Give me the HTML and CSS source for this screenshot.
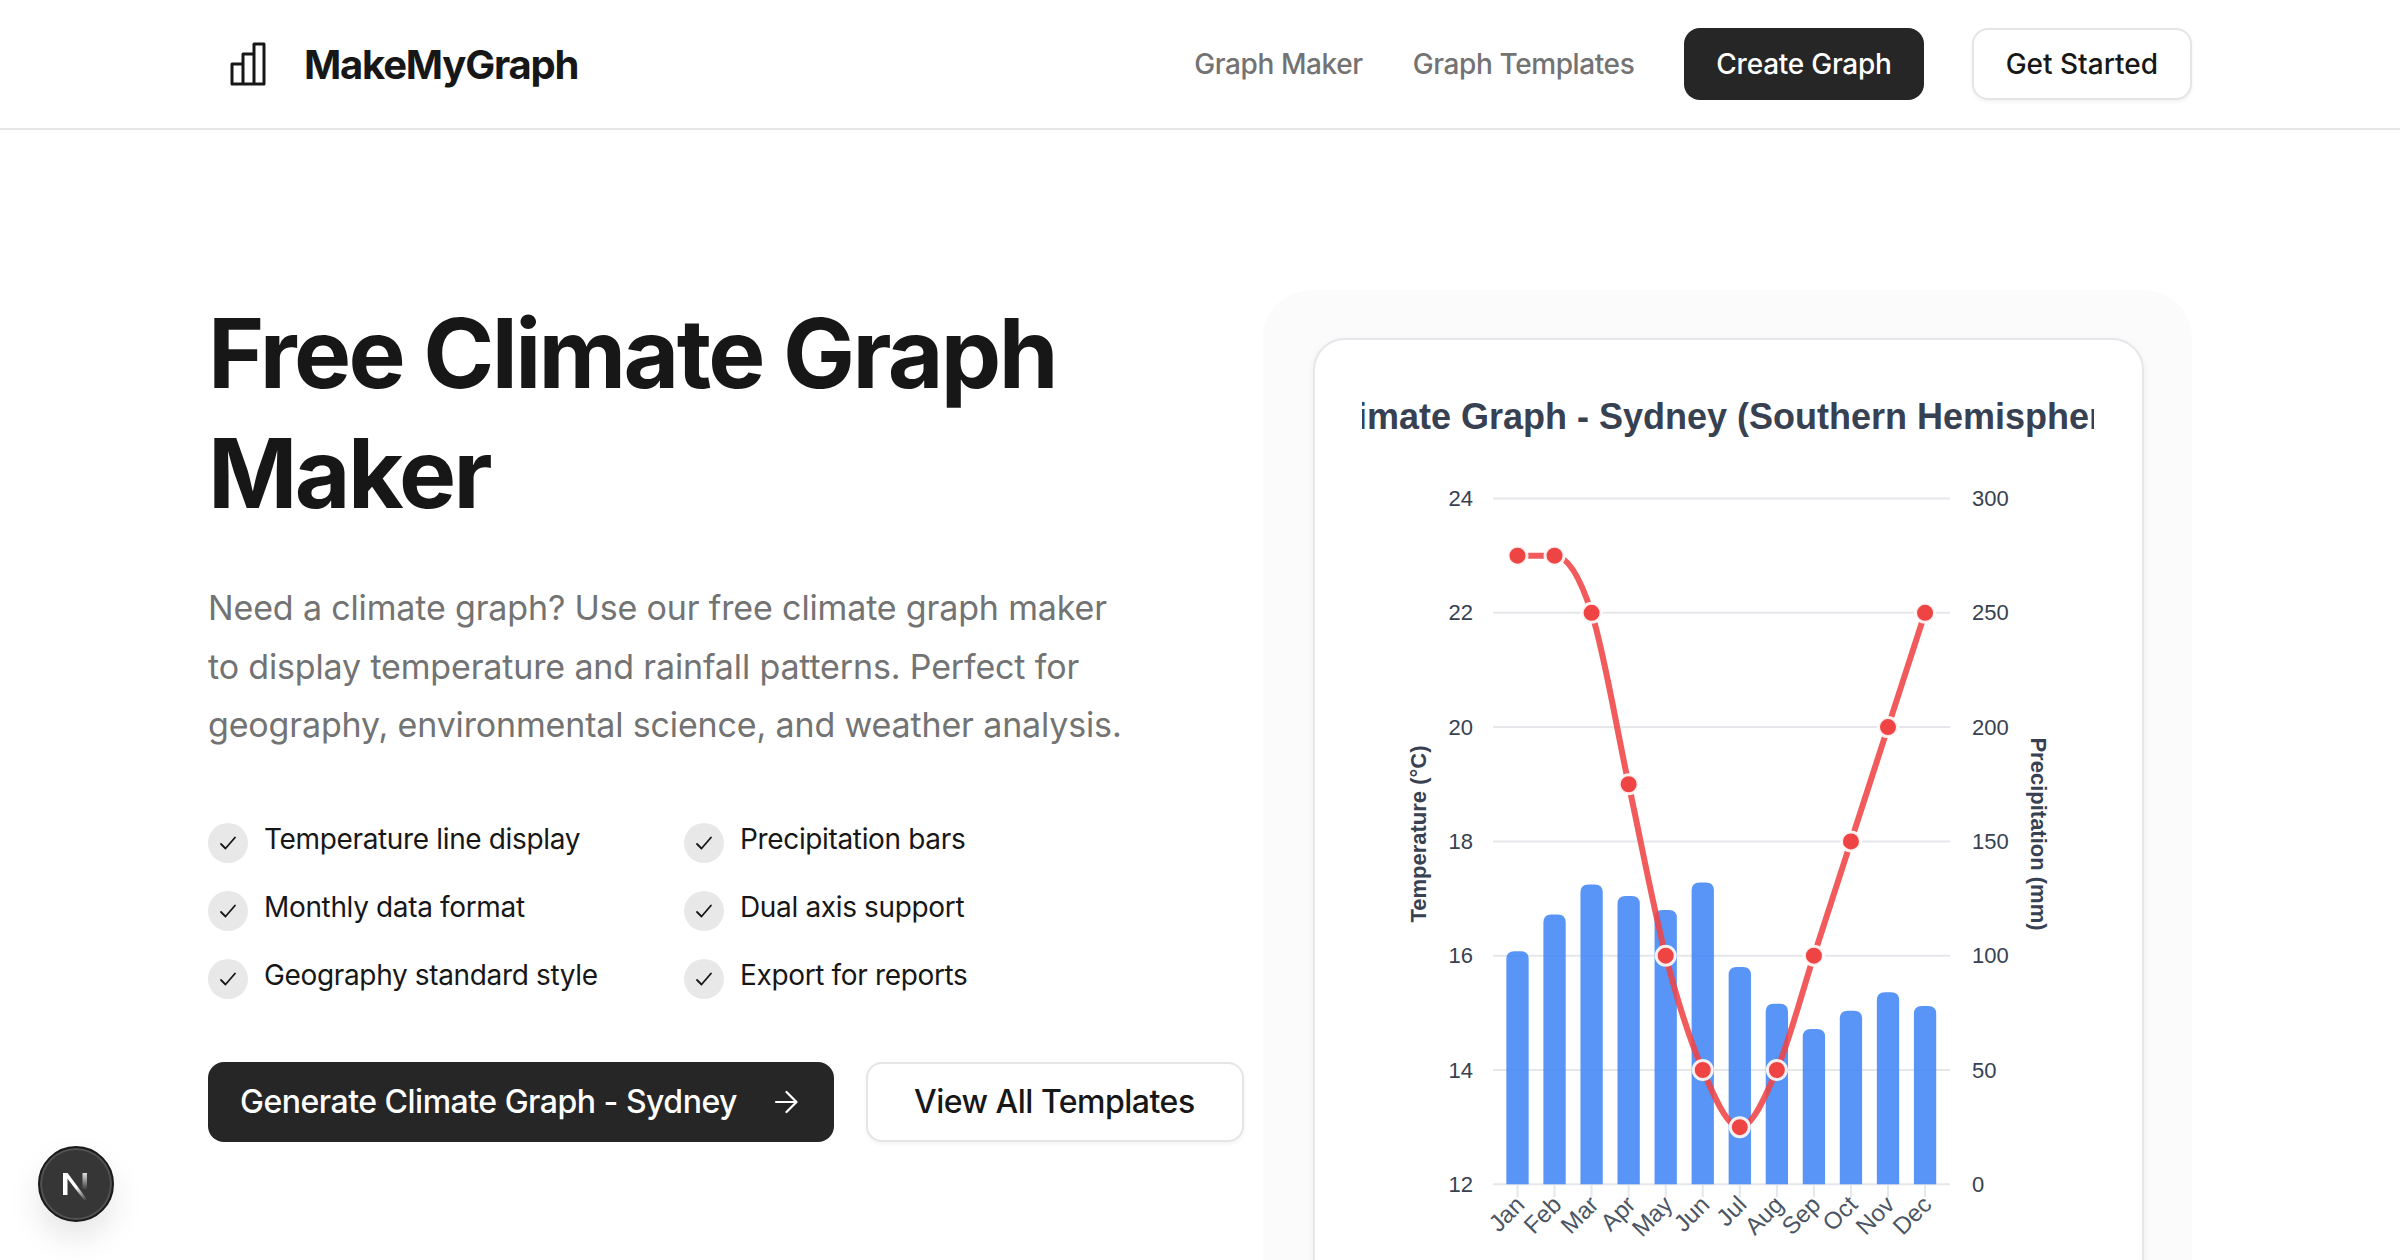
FILE: index.html
```html
<!DOCTYPE html>
<html lang="en">
<head>
    <meta charset="UTF-8">
    <meta name="viewport" content="width=device-width, initial-scale=1.0">
    <title>Free Climate Graph Maker</title>
    <link rel="stylesheet" href="styles.css">
</head>
<body>

    <header class="site-header">
        <a class="brand" href="#">
            <svg class="brand-icon" width="36" height="44" viewBox="0 0 36 44" fill="none" stroke="currentColor" stroke-width="3" stroke-linejoin="round">
                <path d="M2 42V22h11v20zM13 42V12h11v30zM24 42V2h10v40z"/>
            </svg>
            <span class="brand-name">MakeMyGraph</span>
        </a>
        <nav class="main-nav">
            <a class="nav-link" href="#">Graph Maker</a>
            <a class="nav-link" href="#">Graph Templates</a>
            <a class="btn btn-dark btn-small" href="#">Create Graph</a>
            <a class="btn btn-light btn-small" href="#">Get Started</a>
        </nav>
    </header>

    <main class="hero">
        <section class="hero-text">
            <h1>Free Climate Graph Maker</h1>
            <p class="lead">Need a climate graph? Use our free climate graph maker to display temperature and rainfall patterns. Perfect for geography, environmental science, and weather analysis.</p>

            <ul class="features">
                <li><span class="check"><svg width="20" height="20" viewBox="0 0 20 20"><path d="M3 11l4.500 4.500L17 4.500"/></svg></span>Temperature line display</li>
                <li><span class="check"><svg width="20" height="20" viewBox="0 0 20 20"><path d="M3 11l4.500 4.500L17 4.500"/></svg></span>Precipitation bars</li>
                <li><span class="check"><svg width="20" height="20" viewBox="0 0 20 20"><path d="M3 11l4.500 4.500L17 4.500"/></svg></span>Monthly data format</li>
                <li><span class="check"><svg width="20" height="20" viewBox="0 0 20 20"><path d="M3 11l4.500 4.500L17 4.500"/></svg></span>Dual axis support</li>
                <li><span class="check"><svg width="20" height="20" viewBox="0 0 20 20"><path d="M3 11l4.500 4.500L17 4.500"/></svg></span>Geography standard style</li>
                <li><span class="check"><svg width="20" height="20" viewBox="0 0 20 20"><path d="M3 11l4.500 4.500L17 4.500"/></svg></span>Export for reports</li>
            </ul>

            <div class="actions">
                <a class="btn btn-dark btn-large btn-arrow" href="#">
                    Generate Climate Graph - Sydney
                    <svg class="arrow" width="24" height="24" viewBox="0 0 24 24" fill="none" stroke="currentColor" stroke-width="2.200" stroke-linecap="round" stroke-linejoin="round"><path d="M2 12h20M12.500 2l10 10-10 10"/></svg>
                </a>
                <a class="btn btn-light btn-large btn-wide" href="#">View All Templates</a>
            </div>
        </section>

        <section class="preview">
            <div class="chart-card">
                <svg class="chart" width="732" height="900" viewBox="0 0 732 900">
                    <text class="chart-title" x="366" y="43" text-anchor="middle">Climate Graph - Sydney (Southern Hemisphere)</text>

                    <g class="grid">
                        <path d="M131 112.500H588M131 226.800H588M131 341.100H588M131 455.400H588M131 569.700H588M131 684H588M131 798.300H588"/>
                        <path d="M155.500 798V811M192.550 798V811M229.600 798V811M266.650 798V811M303.700 798V811M340.750 798V811M377.800 798V811M414.850 798V811M451.900 798V811M488.950 798V811M526 798V811M563.050 798V811"/>
                    </g>

                    <g class="tick" text-anchor="end">
                        <text x="111" y="120">24</text>
                        <text x="111" y="234">22</text>
                        <text x="111" y="349">20</text>
                        <text x="111" y="463">18</text>
                        <text x="111" y="577">16</text>
                        <text x="111" y="692">14</text>
                        <text x="111" y="806">12</text>
                    </g>
                    <g class="tick">
                        <text x="610" y="120">300</text>
                        <text x="610" y="234">250</text>
                        <text x="610" y="349">200</text>
                        <text x="610" y="463">150</text>
                        <text x="610" y="577">100</text>
                        <text x="610" y="692">50</text>
                        <text x="610" y="806">0</text>
                    </g>

                    <text class="axis-title" text-anchor="middle" transform="translate(64 448) rotate(-90)">Temperature (°C)</text>
                    <text class="axis-title" text-anchor="middle" transform="translate(669 448) rotate(90)">Precipitation (mm)</text>

                    <g class="bars">
                        <path d="M144.350 798.300V573.200q0-8 8-8h6.300q8 0 8 8V798.300z"/>
                        <path d="M181.400 798.300V536.600q0-8 8-8h6.300q8 0 8 8V798.300z"/>
                        <path d="M218.450 798.300V506.600q0-8 8-8h6.300q8 0 8 8V798.300z"/>
                        <path d="M255.500 798.300V518q0-8 8-8h6.300q8 0 8 8V798.300z"/>
                        <path d="M292.550 798.300V532q0-8 8-8h6.300q8 0 8 8V798.300z"/>
                        <path d="M329.600 798.300V504.400q0-8 8-8h6.300q8 0 8 8V798.300z"/>
                        <path d="M366.650 798.300V589q0-8 8-8h6.300q8 0 8 8V798.300z"/>
                        <path d="M403.700 798.300V625.700q0-8 8-8h6.300q8 0 8 8V798.300z"/>
                        <path d="M440.750 798.300V650.900q0-8 8-8h6.300q8 0 8 8V798.300z"/>
                        <path d="M477.800 798.300V632.700q0-8 8-8h6.300q8 0 8 8V798.300z"/>
                        <path d="M514.850 798.300V614.200q0-8 8-8h6.300q8 0 8 8V798.300z"/>
                        <path d="M551.900 798.300V628q0-8 8-8h6.300q8 0 8 8V798.300z"/>
                    </g>

                    <path class="temp-line" d="M155.500 169.650C167.850 169.650 180.200 169.650 192.550 169.650C204.900 169.650 217.250 188.700 229.600 226.800C241.950 264.900 254.300 341.100 266.650 398.250C279 455.400 291.350 522.070 303.700 569.700C316.050 617.330 328.400 655.420 340.750 684C353.100 712.580 365.450 741.150 377.800 741.150C390.150 741.150 402.500 712.580 414.850 684C427.200 655.420 439.550 607.800 451.900 569.700C464.250 531.600 476.600 493.500 488.950 455.400C501.300 417.300 513.650 379.200 526 341.100C538.350 303 550.700 264.900 563.050 226.800"/>

                    <g class="temp-dots">
                        <circle cx="155.500" cy="169.650" r="9.500"/>
                        <circle cx="192.550" cy="169.650" r="9.500"/>
                        <circle cx="229.600" cy="226.800" r="9.500"/>
                        <circle cx="266.650" cy="398.250" r="9.500"/>
                        <circle cx="303.700" cy="569.700" r="9.500"/>
                        <circle cx="340.750" cy="684" r="9.500"/>
                        <circle cx="377.800" cy="741.150" r="9.500"/>
                        <circle cx="414.850" cy="684" r="9.500"/>
                        <circle cx="451.900" cy="569.700" r="9.500"/>
                        <circle cx="488.950" cy="455.400" r="9.500"/>
                        <circle cx="526" cy="341.100" r="9.500"/>
                        <circle cx="563.050" cy="226.800" r="9.500"/>
                    </g>

                    <g class="month" text-anchor="end">
                        <text transform="translate(164 820) rotate(-45)">Jan</text>
                        <text transform="translate(201 820) rotate(-45)">Feb</text>
                        <text transform="translate(238 820) rotate(-45)">Mar</text>
                        <text transform="translate(275 820) rotate(-45)">Apr</text>
                        <text transform="translate(312 820) rotate(-45)">May</text>
                        <text transform="translate(349 820) rotate(-45)">Jun</text>
                        <text transform="translate(386 820) rotate(-45)">Jul</text>
                        <text transform="translate(423 820) rotate(-45)">Aug</text>
                        <text transform="translate(460 820) rotate(-45)">Sep</text>
                        <text transform="translate(497 820) rotate(-45)">Oct</text>
                        <text transform="translate(534 820) rotate(-45)">Nov</text>
                        <text transform="translate(571 820) rotate(-45)">Dec</text>
                    </g>
                </svg>
            </div>
        </section>
    </main>

    <!-- dev indicator in the corner -->
    <div class="dev-badge">
        <svg width="30" height="34" viewBox="0 0 30 34">
            <defs>
                <linearGradient id="nDiagonal" gradientUnits="userSpaceOnUse" x1="6" y1="6" x2="26" y2="33">
                    <stop offset="0.5" stop-color="#fff"/>
                    <stop offset="1" stop-color="#fff" stop-opacity="0"/>
                </linearGradient>
                <linearGradient id="nStem" x1="0" y1="0" x2="0" y2="1">
                    <stop offset="0" stop-color="#fff" stop-opacity="0.85"/>
                    <stop offset="1" stop-color="#fff" stop-opacity="0"/>
                </linearGradient>
            </defs>
            <rect x="2" y="6" width="4.500" height="22" fill="#fff"/>
            <path d="M2 6h4.600L26.500 33H23z" fill="url(#nDiagonal)"/>
            <rect x="21.500" y="6" width="4.500" height="17" fill="url(#nStem)"/>
        </svg>
    </div>

</body>
</html>
```

FILE: styles.css
```css
/* --- page --- */
html, body {
    height: 100%;
}

body {
    margin: 0;
    height: 1260px;
    overflow: hidden;
    background-color: white;
    color: #171717;
    font-family: Inter, 'Noto Sans', sans-serif;
}

a {
    color: inherit;
    text-decoration: none;
}

/* --- header --- */
.site-header {
    display: flex;
    justify-content: space-between;
    align-items: center;
    height: 128px;
    padding: 0 208px;
    border-bottom: 2px solid #e5e5e5;
}

.brand {
    display: flex;
    align-items: center;
    gap: 38px;
    margin-left: 22px;
}

.brand-icon {
    display: block;
}

.brand-name {
    font-size: 40px;
    font-weight: 700;
    letter-spacing: -1.200px;
}

.main-nav {
    display: flex;
    align-items: center;
    gap: 48px;
}

.nav-link {
    margin-right: 2px;
    font-size: 28px;
    font-weight: 500;
    letter-spacing: -0.400px;
    color: #737373;
}

/* --- buttons --- */
.btn {
    display: flex;
    align-items: center;
    justify-content: center;
    box-sizing: border-box;
    font-weight: 500;
    white-space: nowrap;
}

.btn-dark {
    background-color: #262626;
    color: white;
}

.btn-light {
    background-color: white;
    color: #171717;
    border: 2px solid #e5e5e5;
    box-shadow: 0 2px 4px rgba(0, 0, 0, 0.05);
}

.btn-small {
    height: 72px;
    padding: 0 32px;
    border-radius: 16px;
    font-size: 28px;
}

.btn-dark.btn-small {
    letter-spacing: -0.250px;
}

.btn-large {
    height: 80px;
    padding: 0 32px;
    border-radius: 16px;
    font-size: 32px;
    letter-spacing: -0.500px;
}

.btn-arrow {
    padding-right: 36px;
}

.btn-wide {
    padding: 0 47px 0 46px;
}

.arrow {
    margin-left: 37px;
}

/* --- hero --- */
.hero {
    display: grid;
    grid-template-columns: 1fr 929px;
    padding: 160px 208px 0;
}

h1 {
    margin: 3px 0 46px;
    max-width: 960px;
    font-size: 96px;
    line-height: 120px;
    font-weight: 700;
    letter-spacing: -2.600px;
}

.lead {
    margin: 0 0 64px;
    max-width: 930px;
    font-size: 34px;
    line-height: 58.500px;
    letter-spacing: -0.150px;
    color: #737373;
}

.features {
    display: grid;
    grid-template-columns: 476px 1fr;
    row-gap: 24px;
    margin: 0 0 63px;
    padding: 0;
    list-style: none;
}

.features li {
    display: flex;
    gap: 16px;
    font-size: 28px;
    line-height: 40px;
    letter-spacing: -0.350px;
}

.check {
    display: flex;
    justify-content: center;
    align-items: center;
    flex-shrink: 0;
    width: 40px;
    height: 40px;
    margin-top: 4px;
    border-radius: 50%;
    background-color: #e8e8e8;
}

.check path {
    fill: none;
    stroke: #171717;
    stroke-width: 1.800;
    stroke-linecap: round;
    stroke-linejoin: round;
}

.actions {
    display: flex;
    gap: 32px;
}

/* --- chart preview --- */
.preview {
    padding: 48px 48px 0 50px;
    border-radius: 48px 48px 0 0;
    background-color: #fbfbfb;
    height: 970px;
}

.chart-card {
    box-sizing: border-box;
    height: 1000px;
    padding: 46px 45px 46px 47px;
    border: 2px solid #e5e7eb;
    border-radius: 32px;
    background-color: white;
    box-shadow: 0 2px 6px rgba(0, 0, 0, 0.06);
}

.chart {
    display: block;
    font-family: 'Liberation Sans', Arial, sans-serif;
}

.chart-title {
    font-size: 36px;
    font-weight: 700;
    fill: #374151;
}

.grid path {
    fill: none;
    stroke: #e5e7eb;
    stroke-width: 2;
}

.tick text {
    font-size: 22px;
    fill: #374151;
}

.month text {
    font-size: 24px;
    fill: #4b5563;
}

.axis-title {
    font-size: 22px;
    font-weight: 700;
    fill: #374151;
}

.bars path {
    fill: #3b82f6;
    opacity: 0.85;
}

.temp-line {
    fill: none;
    stroke: #ef4444;
    stroke-width: 6;
    opacity: 0.88;
}

.temp-dots circle {
    fill: #ef4444;
    stroke: white;
    stroke-width: 3;
    stroke-opacity: 0.9;
}

/* --- dev badge --- */
.dev-badge {
    position: fixed;
    left: 38px;
    top: 1146px;
    display: flex;
    justify-content: center;
    align-items: center;
    box-sizing: border-box;
    width: 76px;
    height: 76px;
    border: 2px solid #1a1a1a;
    border-radius: 50%;
    background-color: #363636;
    box-shadow: inset 0 0 0 2px rgba(255, 255, 255, 0.14), 0 16px 32px rgba(0, 0, 0, 0.1);
}
```
